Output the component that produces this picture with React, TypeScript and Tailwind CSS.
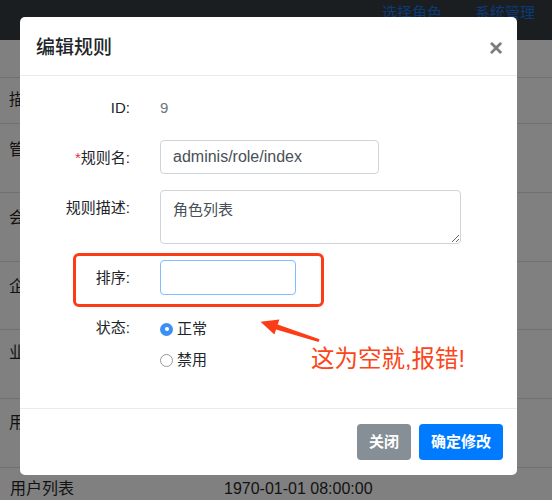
import React from "react";

const cjk = { fontFamily: '"Liberation Sans","Noto Sans CJK SC",sans-serif' };

function BgRow({ h, pt, text }: { h: string; pt: string; text: string }) {
  return (
    <div className={`${h} ${pt} border-b border-[#717171] flex text-[16px] leading-[24px] text-[#121212]`}>
      <div className="pl-[9px] w-[215px]">{text}</div>
    </div>
  );
}

export default function App() {
  return (
    <div className="relative w-[552px] h-[500px] overflow-hidden bg-[#808080]" style={cjk}>
      {/* dimmed page behind */}
      <div className="h-[40px] bg-[#1b1e21] flex justify-end">
        <div className="flex gap-[33px] pr-[17px] text-[15px] leading-[25px] text-[#0b3a78]">
          <span>选择角色</span>
          <span>系统管理</span>
        </div>
      </div>
      <div className="h-[38px] border-b border-[#717171]" />
      <BgRow h="h-[46px]" pt="pt-[10px]" text="描述" />
      <BgRow h="h-[69px]" pt="pt-[14px]" text="管理员列表" />
      <BgRow h="h-[69px]" pt="pt-[13px]" text="会员列表" />
      <BgRow h="h-[68px]" pt="pt-[13px]" text="企业列表" />
      <BgRow h="h-[69px]" pt="pt-[11px]" text="业务列表" />
      <BgRow h="h-[69px]" pt="pt-[12px]" text="用户管理" />
      <div className="pt-[9px] flex text-[16px] leading-[24px] text-[#121212]">
        <div className="pl-[10px] w-[224px]">用户列表</div>
        <div>1970-01-01 08:00:00</div>
      </div>

      {/* modal */}
      <div className="absolute left-[20px] top-[17px] w-[497px] bg-white rounded-[5px] text-[#212529]">
        <div className="h-[59px] flex items-start justify-between px-[16px] pt-[16px] border-b border-[#e9ecef]">
          <div className="text-[19px] leading-[30px] font-medium">编辑规则</div>
          <div className="text-[24px] leading-[30px] font-bold text-[#7b7b7b] mr-[-2px]">×</div>
        </div>
        <div className="h-[332px] pt-[20px] px-[16px]">
          {/* ID */}
          <div className="flex items-start">
            <div className="w-[94px] shrink-0 text-right text-[15px] leading-[24px]">ID:</div>
            <div className="ml-[30px] text-[15px] leading-[24px] text-[#6c757d]">9</div>
          </div>
          {/* name */}
          <div className="flex items-start mt-[20px]">
            <div className="w-[94px] shrink-0 text-right text-[15px] leading-[24px] pt-[6px]">
              <span className="text-[#dc3545]">*</span>规则名:
            </div>
            <input
              readOnly
              defaultValue="adminis/role/index"
              className="ml-[30px] w-[219px] h-[34px] border border-[#ced4da] rounded-[4px] px-[12px] text-[16px] text-[#495057] outline-none"
              style={{ fontFamily: '"Liberation Sans",sans-serif' }}
            />
          </div>
          {/* desc */}
          <div className="flex items-start mt-[16px]">
            <div className="w-[94px] shrink-0 text-right text-[15px] leading-[24px] pt-[6px]">规则描述:</div>
            <textarea
              readOnly
              defaultValue="角色列表"
              className="ml-[30px] w-[301px] h-[54px] border border-[#ced4da] rounded-[4px] px-[12px] pt-[7px] text-[15px] leading-[24px] text-[#495057] outline-none"
              style={cjk}
            />
          </div>
          {/* sort */}
          <div className="flex items-start mt-[16px]">
            <div className="w-[94px] shrink-0 text-right text-[15px] leading-[24px] pt-[6px]">排序:</div>
            <div className="ml-[30px] w-[136px] h-[35px] border border-[#80bdff] rounded-[4px]" />
          </div>
          {/* status */}
          <div className="flex items-start mt-[21px]">
            <div className="w-[94px] shrink-0 text-right text-[15px] leading-[24px]">状态:</div>
            <div className="ml-[30px] pt-[1px] flex flex-col gap-[7px]">
              <div className="flex items-center gap-[4px] text-[15px] leading-[24px]">
                <span className="w-[13px] h-[13px] rounded-full bg-[#3d8ef5] flex items-center justify-center">
                  <span className="w-[4px] h-[4px] rounded-full bg-white" />
                </span>
                <span>正常</span>
              </div>
              <div className="flex items-center gap-[4px] text-[15px] leading-[24px]">
                <span className="w-[13px] h-[13px] rounded-full bg-white border border-[#9a9a9a]" />
                <span>禁用</span>
              </div>
            </div>
          </div>
        </div>
        <div className="border-t border-[#e9ecef] flex justify-end gap-[8px] pt-[15px] pb-[15px] pr-[14px]">
          <div className="h-[36px] px-[12px] rounded-[4px] bg-[#868e96] text-white text-[15px] font-semibold flex items-center">关闭</div>
          <div className="h-[36px] px-[12px] rounded-[4px] bg-[#007bff] text-white text-[15px] font-semibold flex items-center">确定修改</div>
        </div>
      </div>

      {/* annotations */}
      <div className="absolute left-[73px] top-[253px] w-[251px] h-[54px] border-[3px] border-[#fc3c17] rounded-[6px]" />
      <svg className="absolute left-0 top-0" width="552" height="500" viewBox="0 0 552 500">
        <polygon
          points="260.5,321.7 279.4,319.4 277.7,324.6 319.5,339.3 318.6,342.1 276.1,329.4 274.4,334.6"
          fill="#fc3c17"
        />
      </svg>
      <div className="absolute left-[311px] top-[343px] text-[23.5px] leading-[32px] text-[#fc4519]">这为空就,报错!</div>
    </div>
  );
}
